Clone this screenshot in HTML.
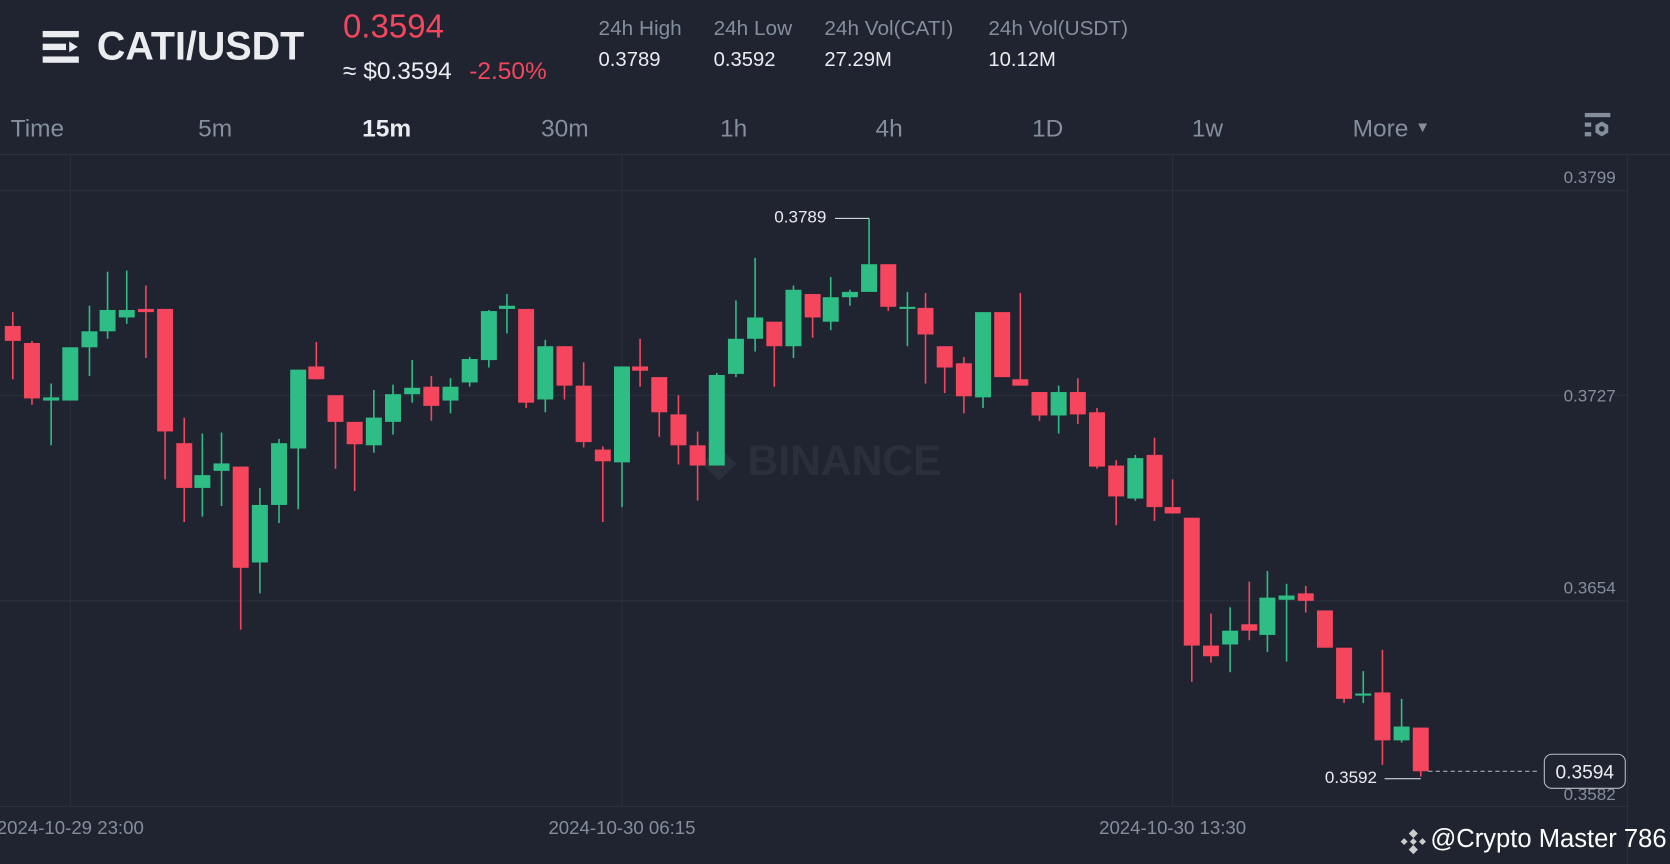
<!DOCTYPE html>
<html><head><meta charset="utf-8"><style>
html,body{margin:0;padding:0;background:#1f2430;width:1670px;height:864px;overflow:hidden}
#w{position:absolute;left:0;top:0;width:1568px;height:811px;transform:scale(1.06505,1.0653);transform-origin:0 0;font-family:"Liberation Sans",sans-serif;color:#eaecef}
.t{position:absolute;white-space:nowrap}
.g{color:#848e9c}
</style></head><body><div id="w">
<svg class="t" style="left:40px;top:29px" width="36" height="30" viewBox="0 0 36 30"><rect x="0" y="0" width="34" height="6" fill="#eaecef"/><rect x="0" y="12" width="22" height="6" fill="#eaecef"/><path d="M25 10 L33 15 L25 20Z" fill="#eaecef"/><rect x="0" y="24" width="34" height="6" fill="#eaecef"/></svg>
<div class="t" style="left:91px;top:23px;font-size:37px;font-weight:bold">CATI/USDT</div>
<div class="t" style="left:322px;top:7px;font-size:31px;color:#f6465d">0.3594</div>
<div class="t" style="left:322px;top:53px;font-size:23px">≈ $0.3594 <span style="color:#f6465d;margin-left:10px">-2.50%</span></div>
<div class="t g" style="left:562px;top:16px;font-size:19.5px">24h High</div>
<div class="t g" style="left:670px;top:16px;font-size:19.5px">24h Low</div>
<div class="t g" style="left:774px;top:16px;font-size:19.5px">24h Vol(CATI)</div>
<div class="t g" style="left:928px;top:16px;font-size:19.5px">24h Vol(USDT)</div>
<div class="t" style="left:562px;top:46px;font-size:19px">0.3789</div>
<div class="t" style="left:670px;top:46px;font-size:19px">0.3592</div>
<div class="t" style="left:774px;top:46px;font-size:19px">27.29M</div>
<div class="t" style="left:928px;top:46px;font-size:19px">10.12M</div>
<div class="t g" style="left:10px;top:107px;font-size:23px">Time</div>
<div class="t g" style="left:186px;top:107px;font-size:23px">5m</div>
<div class="t" style="left:340px;top:107px;font-size:23px;font-weight:bold">15m</div>
<div class="t g" style="left:508px;top:107px;font-size:23px">30m</div>
<div class="t g" style="left:676px;top:107px;font-size:23px">1h</div>
<div class="t g" style="left:822px;top:107px;font-size:23px">4h</div>
<div class="t g" style="left:969px;top:107px;font-size:23px">1D</div>
<div class="t g" style="left:1119px;top:107px;font-size:23px">1w</div>
<div class="t g" style="left:1270px;top:107px;font-size:23px">More <span style="font-size:14px;position:relative;top:-4px">▼</span></div>
<svg class="t" style="left:1486px;top:104px" width="28" height="28" viewBox="0 0 28 28"><rect x="2" y="2" width="24" height="4" fill="#848e9c"/><rect x="2" y="11" width="6" height="4" fill="#848e9c"/><rect x="2" y="20" width="6" height="4" fill="#848e9c"/><path d="M18 10 L24 13.5 L24 20.5 L18 24 L12 20.5 L12 13.5Z" fill="#848e9c"/><circle cx="18" cy="17" r="2.6" fill="#1f2430"/></svg>
<svg class="t" style="left:0;top:0" width="1568" height="811" id="ch">
<g stroke="#2b313c" stroke-width="1">
<line x1="0" y1="145" x2="1568" y2="145"/>
<line x1="0" y1="179" x2="1528" y2="179"/><line x1="0" y1="371" x2="1528" y2="371"/><line x1="0" y1="564" x2="1528" y2="564"/><line x1="0" y1="757" x2="1528" y2="757"/>
<line x1="66" y1="145" x2="66" y2="757"/><line x1="584" y1="145" x2="584" y2="757"/><line x1="1101" y1="145" x2="1101" y2="757"/><line x1="1528" y1="145" x2="1528" y2="811"/>
</g>
<text x="660" y="446" font-family="Liberation Sans" font-weight="bold" font-size="40" fill="#2a303b">◆ BINANCE</text>
<g font-family="Liberation Sans" font-size="16" fill="#848e9c" text-anchor="end">
<text x="1517" y="172">0.3799</text><text x="1517" y="377">0.3727</text><text x="1517" y="557">0.3654</text><text x="1517" y="751">0.3582</text>
</g>
<g font-family="Liberation Sans" font-size="17.5" fill="#848e9c" text-anchor="middle">
<text x="66" y="783">2024-10-29 23:00</text><text x="584" y="783">2024-10-30 06:15</text><text x="1101" y="783">2024-10-30 13:30</text>
</g>
<g id="cs"></g>
<g font-family="Liberation Sans" font-size="16" fill="#eaecef">
<text x="727" y="209">0.3789</text><line x1="784" y1="205" x2="816" y2="205" stroke="#eaecef"/>
<text x="1244" y="735">0.3592</text><line x1="1300" y1="731" x2="1334" y2="731" stroke="#eaecef"/>
</g>
<line x1="1341" y1="724" x2="1444" y2="724" stroke="#b7bdc6" stroke-dasharray="4,3"/>
<rect x="1450" y="708" width="76" height="32" rx="7" fill="#1f2430" stroke="#b7bdc6"/>
<text x="1488" y="731" text-anchor="middle" font-family="Liberation Sans" font-size="18" fill="#eaecef">0.3594</text>
</svg>
<svg class="t" style="left:1313px;top:776px" width="28" height="28" viewBox="0 0 26 26"><g fill="#ccc"><path d="M13 2l4 4-4 4-4-4z"/><path d="M13 16l4 4-4 4-4-4z"/><path d="M2 13l3-3 3 3-3 3z"/><path d="M18 13l3-3 3 3-3 3z"/><path d="M13 10l3 3-3 3-3-3z"/></g></svg>
<div class="t" style="left:1343px;top:774px;font-size:24px;color:#fff">@Crypto Master 786</div>
</div>
<script>
var d=[[12,'r',306,320,293,356],[30,'r',322,374,320,380],[48,'g',373,376,360,418],[66,'g',326,376,326,376],[84,'g',311,326,287,353],[101,'g',291,311,255,318],[119,'g',291,298,254,304],[137,'r',290,293,268,336],[155,'r',290,405,290,450],[173,'r',416,458,392,490],[190,'g',446,458,407,485],[208,'g',435,442,406,475],[226,'r',438,533,438,591],[244,'g',474,528,458,557],[262,'g',416,474,412,491],[280,'g',347,421,347,478],[297,'r',344,356,321,356],[315,'r',371,396,371,440],[333,'r',396,417,396,461],[351,'g',392,418,366,425],[369,'g',370,396,361,408],[387,'g',364,370,338,378],[405,'r',363,381,353,395],[423,'g',363,376,355,388],[441,'g',337,359,335,363],[459,'g',292,338,291,345],[476,'g',287,290,276,313],[494,'r',290,378,290,383],[512,'g',325,375,319,387],[530,'r',325,362,325,375],[548,'r',362,415,340,420],[566,'r',422,433,419,490],[584,'g',344,434,344,476],[601,'r',344,348,318,363],[619,'r',354,387,354,410],[637,'r',389,418,371,436],[655,'r',418,437,405,470],[673,'g',352,437,350,437],[691,'g',318,351,282,354],[709,'g',298,318,242,330],[727,'r',302,325,302,363],[745,'g',272,325,268,336],[763,'r',276,298,276,317],[780,'g',279,302,260,310],[798,'g',274,279,272,287],[816,'g',248,274,205,274],[834,'r',248,288,248,292],[852,'g',288,290,274,325],[869,'r',289,314,275,360],[887,'r',325,345,325,369],[905,'r',341,372,335,388],[923,'g',293,373,293,383],[941,'r',293,354,293,354],[958,'r',356,362,275,362],[976,'r',368,390,368,395],[994,'g',368,390,362,407],[1012,'r',368,389,355,398],[1030,'r',387,438,383,440],[1048,'r',437,466,432,493],[1066,'g',430,468,427,470],[1084,'r',427,476,411,489],[1101,'r',476,482,450,482],[1119,'r',486,606,486,640],[1137,'r',606,616,576,622],[1155,'g',592,605,570,631],[1173,'r',586,592,546,601],[1190,'g',561,596,536,612],[1208,'g',559,563,548,621],[1226,'r',557,564,550,575],[1244,'r',573,608,573,608],[1262,'r',608,656,608,660],[1280,'g',651,653,630,660],[1298,'r',650,695,610,718],[1316,'g',682,695,656,697],[1334,'r',683,724,683,729]];
var s='';d.forEach(function(c){var col=c[1]=='r'?'#f6465d':'#2ebd85';var h=Math.max(2,c[3]-c[2]);s+='<line x1="'+c[0]+'" x2="'+c[0]+'" y1="'+c[4]+'" y2="'+c[5]+'" stroke="'+col+'" stroke-width="1.5"/><rect x="'+(c[0]-7.5)+'" y="'+c[2]+'" width="15" height="'+h+'" fill="'+col+'"/>';});
document.getElementById('cs').innerHTML=s;
</script>
</body></html>
